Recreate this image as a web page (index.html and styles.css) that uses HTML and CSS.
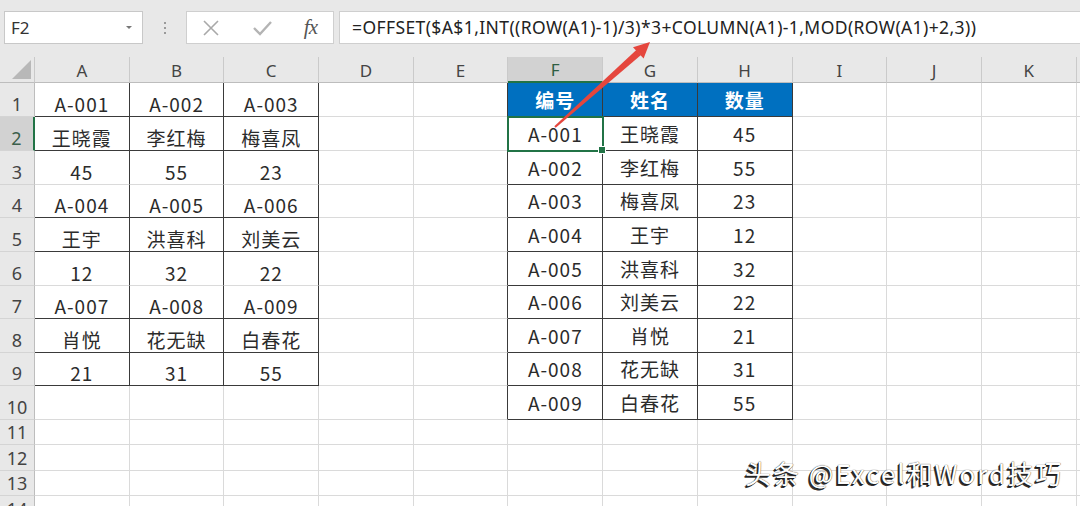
FILE: index.html
```html
<!DOCTYPE html>
<html lang="zh">
<head>
<meta charset="utf-8">
<title>Excel</title>
<link rel="stylesheet" href="styles.css">
</head>
<body>
<div class="app">
  <div class="toolbar">
    <div class="namebox"><span>F2</span><span class="caret"></span></div>
    <div class="dots"><i></i><i></i><i></i></div>
    <div class="fxbox">
      <svg class="ic" width="20" height="20" viewBox="0 0 20 20"><path d="M3 3 L17 17 M17 3 L3 17" stroke="#a9a9a9" stroke-width="1.6" fill="none"/></svg>
      <svg class="ic" width="22" height="20" viewBox="0 0 22 20"><path d="M3 10 L9 16 L20 4" stroke="#b4b4b4" stroke-width="2.4" fill="none"/></svg>
      <span class="fx">fx</span>
    </div>
    <div class="formula">=OFFSET($A$1,INT((ROW(A1)-1)/3)*3+COLUMN(A1)-1,MOD(ROW(A1)+2,3))</div>
  </div>
  <div class="sheet">
    <div class="corner"><span></span></div>
    <div class="ch">A</div><div class="ch">B</div><div class="ch">C</div><div class="ch">D</div><div class="ch">E</div><div class="ch act">F</div><div class="ch">G</div><div class="ch">H</div><div class="ch">I</div><div class="ch">J</div><div class="ch">K</div><div class="ch end"></div>

    <div class="rh">1</div>
    <div class="c r b">A-001</div><div class="c r b">A-002</div><div class="c r b">A-003</div><div class="c"></div><div class="c r"></div>
    <div class="c r b m blue">编号</div><div class="c r b m blue">姓名</div><div class="c r b m blue">数量</div>
    <div class="c"></div><div class="c"></div><div class="c"></div><div class="c end"></div>

    <div class="rh act">2</div>
    <div class="c r b">王晓霞</div><div class="c r b">李红梅</div><div class="c r b">梅喜凤</div><div class="c"></div><div class="c r"></div>
    <div class="c r b m sel">A-001</div><div class="c r b m">王晓霞</div><div class="c r b m">45</div>
    <div class="c"></div><div class="c"></div><div class="c"></div><div class="c end"></div>

    <div class="rh">3</div>
    <div class="c r">45</div><div class="c r">55</div><div class="c r">23</div><div class="c"></div><div class="c r"></div>
    <div class="c r b m">A-002</div><div class="c r b m">李红梅</div><div class="c r b m">55</div>
    <div class="c"></div><div class="c"></div><div class="c"></div><div class="c end"></div>

    <div class="rh">4</div>
    <div class="c r b">A-004</div><div class="c r b">A-005</div><div class="c r b">A-006</div><div class="c"></div><div class="c r"></div>
    <div class="c r b m">A-003</div><div class="c r b m">梅喜凤</div><div class="c r b m">23</div>
    <div class="c"></div><div class="c"></div><div class="c"></div><div class="c end"></div>

    <div class="rh">5</div>
    <div class="c r b">王宇</div><div class="c r b">洪喜科</div><div class="c r b">刘美云</div><div class="c"></div><div class="c r"></div>
    <div class="c r b m">A-004</div><div class="c r b m">王宇</div><div class="c r b m">12</div>
    <div class="c"></div><div class="c"></div><div class="c"></div><div class="c end"></div>

    <div class="rh">6</div>
    <div class="c r">12</div><div class="c r">32</div><div class="c r">22</div><div class="c"></div><div class="c r"></div>
    <div class="c r b m">A-005</div><div class="c r b m">洪喜科</div><div class="c r b m">32</div>
    <div class="c"></div><div class="c"></div><div class="c"></div><div class="c end"></div>

    <div class="rh">7</div>
    <div class="c r b">A-007</div><div class="c r b">A-008</div><div class="c r b">A-009</div><div class="c"></div><div class="c r"></div>
    <div class="c r b m">A-006</div><div class="c r b m">刘美云</div><div class="c r b m">22</div>
    <div class="c"></div><div class="c"></div><div class="c"></div><div class="c end"></div>

    <div class="rh">8</div>
    <div class="c r b">肖悦</div><div class="c r b">花无缺</div><div class="c r b">白春花</div><div class="c"></div><div class="c r"></div>
    <div class="c r b m">A-007</div><div class="c r b m">肖悦</div><div class="c r b m">21</div>
    <div class="c"></div><div class="c"></div><div class="c"></div><div class="c end"></div>

    <div class="rh">9</div>
    <div class="c r b">21</div><div class="c r b">31</div><div class="c r b">55</div><div class="c"></div><div class="c r"></div>
    <div class="c r b m">A-008</div><div class="c r b m">花无缺</div><div class="c r b m">31</div>
    <div class="c"></div><div class="c"></div><div class="c"></div><div class="c end"></div>

    <div class="rh">10</div>
    <div class="c"></div><div class="c"></div><div class="c"></div><div class="c"></div><div class="c r"></div>
    <div class="c r b m">A-009</div><div class="c r b m">白春花</div><div class="c r b m">55</div>
    <div class="c"></div><div class="c"></div><div class="c"></div><div class="c end"></div>

    <div class="rh">11</div>
    <div class="c"></div><div class="c"></div><div class="c"></div><div class="c"></div><div class="c"></div><div class="c"></div><div class="c"></div><div class="c"></div><div class="c"></div><div class="c"></div><div class="c"></div><div class="c end"></div>
    <div class="rh">12</div>
    <div class="c"></div><div class="c"></div><div class="c"></div><div class="c"></div><div class="c"></div><div class="c"></div><div class="c"></div><div class="c"></div><div class="c"></div><div class="c"></div><div class="c"></div><div class="c end"></div>
    <div class="rh">13</div>
    <div class="c"></div><div class="c"></div><div class="c"></div><div class="c"></div><div class="c"></div><div class="c"></div><div class="c"></div><div class="c"></div><div class="c"></div><div class="c"></div><div class="c"></div><div class="c end"></div>
    <div class="rh last">14</div>
    <div class="c"></div><div class="c"></div><div class="c"></div><div class="c"></div><div class="c"></div><div class="c"></div><div class="c"></div><div class="c"></div><div class="c"></div><div class="c"></div><div class="c"></div><div class="c end"></div>
  </div>

  <svg class="arrow" width="1080" height="506" viewBox="0 0 1080 506">
    <polygon points="554.3,126.2 555.7,127.8 641,55 636.3,50" fill="#e5463d"/>
    <polygon points="650,42 643.6,58.4 633,47.3" fill="#e5463d"/>
  </svg>
  <div class="watermark">头条 @Excel和Word技巧</div>
</div>
</body>
</html>
```

FILE: styles.css
```css
* { box-sizing: border-box; }
html, body { margin: 0; padding: 0; }
body {
  width: 1080px;
  height: 506px;
  overflow: hidden;
  background: #ffffff;
  font-family: "Noto Sans CJK SC", "Noto Sans", sans-serif;
  color: #2b2b2b;
}
.app {
  position: relative;
  width: 1080px;
  height: 506px;
  overflow: hidden;
}
.toolbar {
  height: 57px;
  background: #e8e8e8;
  display: flex;
  align-items: flex-start;
  padding-top: 11px;
  padding-left: 4px;
}
.namebox {
  width: 139px;
  height: 33px;
  background: #fff;
  border: 1px solid #c8c8c8;
  display: flex;
  align-items: center;
  justify-content: space-between;
  padding: 0 10px 0 6px;
  font-family: "Noto Sans", sans-serif;
  font-size: 17px;
  color: #333;
}
.caret {
  width: 0; height: 0;
  border-left: 3px solid transparent;
  border-right: 3px solid transparent;
  border-top: 3px solid #777;
}
.dots {
  width: 43px;
  height: 33px;
  display: flex;
  flex-direction: column;
  align-items: center;
  justify-content: center;
  gap: 3px;
}
.dots i {
  display: block;
  width: 2px; height: 2px;
  background: #9a9a9a;
}
.fxbox {
  width: 148px;
  height: 33px;
  background: #fff;
  border: 1px solid #cfcfcf;
  display: flex;
  align-items: center;
  justify-content: space-between;
  padding: 0 16px 0 14px;
}
.fx {
  font-family: "Liberation Serif", serif;
  font-style: italic;
  font-size: 21px;
  color: #555;
  letter-spacing: -1px;
}
.formula {
  flex: 1;
  height: 33px;
  margin-left: 5px;
  background: #fff;
  border: 1px solid #cfcfcf;
  border-right: none;
  padding-left: 12px;
  font-family: "Noto Sans", sans-serif;
  font-size: 17.5px;
  letter-spacing: 0.4px;
  line-height: 31px;
  color: #222;
  white-space: nowrap;
}
.sheet {
  display: grid;
  grid-template-columns: 35px repeat(11, 94.7px) 1fr;
  grid-template-rows: 26px 34px 34px 34px 33px 34px 34px 33px 34px 33px 34px 25px 26px 25px 25px;
}
.corner {
  background: #e8e8e8;
  border-right: 1px solid #c9c9c9;
  border-bottom: 1px solid #bdbdbd;
  position: relative;
}
.corner span {
  position: absolute;
  right: 3px;
  bottom: 3px;
  width: 0; height: 0;
  border-left: 19px solid transparent;
  border-bottom: 19px solid #b8b8b8;
}
.ch {
  background: #e8e8e8;
  border-right: 1px solid #cacaca;
  border-bottom: 1px solid #bdbdbd;
  display: flex;
  align-items: flex-end;
  justify-content: center;
  font-family: "Noto Sans", sans-serif;
  font-size: 17px;
  line-height: 22px;
  color: #444;
}
.ch.act {
  background: #d2d2d2;
  color: #2e5e42;
  border-bottom: 2px solid #217346;
}
.ch.end { border-right: none; }
.rh {
  background: #e8e8e8;
  border-right: 1px solid #bdbdbd;
  border-bottom: 1px solid #d4d4d4;
  display: flex;
  align-items: flex-end;
  justify-content: center;
  padding-bottom: 1px;
  font-family: "Noto Sans", sans-serif;
  font-size: 18px;
  line-height: 22px;
  color: #444;
}
.rh.last {
  align-items: flex-start;
  padding-top: 2px;
  overflow: hidden;
}
.rh.act {
  background: #d2d2d2;
  color: #3b5f4b;
  border-right: 2px solid #217346;
}
.c {
  position: relative;
  border-right: 1px solid #dadada;
  border-bottom: 1px solid #dadada;
  display: flex;
  align-items: flex-end;
  justify-content: center;
  padding-bottom: 1px;
  font-size: 19px;
  letter-spacing: 1px;
  line-height: 22px;
  color: #2b2b2b;
  white-space: nowrap;
}
.c.m {
  align-items: center;
  padding-bottom: 0;
}
.c.end { border-right: none; }
.c.r { border-right-color: #3a3a3a; }
.c.b { border-bottom-color: #3a3a3a; }
.c.blue {
  background: #0070c0;
  color: #ffffff;
  font-weight: bold;
  font-size: 19px;
}
.c.sel {
  outline: 2px solid #217346;
  outline-offset: -1px;
  z-index: 2;
}
.c.sel::after {
  content: "";
  position: absolute;
  right: -4px;
  bottom: -4px;
  width: 6px;
  height: 6px;
  background: #217346;
  border: 1px solid #fff;
}
.arrow {
  position: absolute;
  left: 0;
  top: 0;
  pointer-events: none;
  z-index: 5;
}
.watermark {
  position: absolute;
  left: 745px;
  top: 456px;
  font-family: "Noto Sans CJK SC", sans-serif;
  font-size: 26px;
  letter-spacing: 2px;
  line-height: 34px;
  color: #ffffff;
  white-space: nowrap;
  z-index: 6;
  text-shadow: -1px 1px 0 #1e1e1e, -2px 2px 0 #333, 0 0 1px #000;
}
```
